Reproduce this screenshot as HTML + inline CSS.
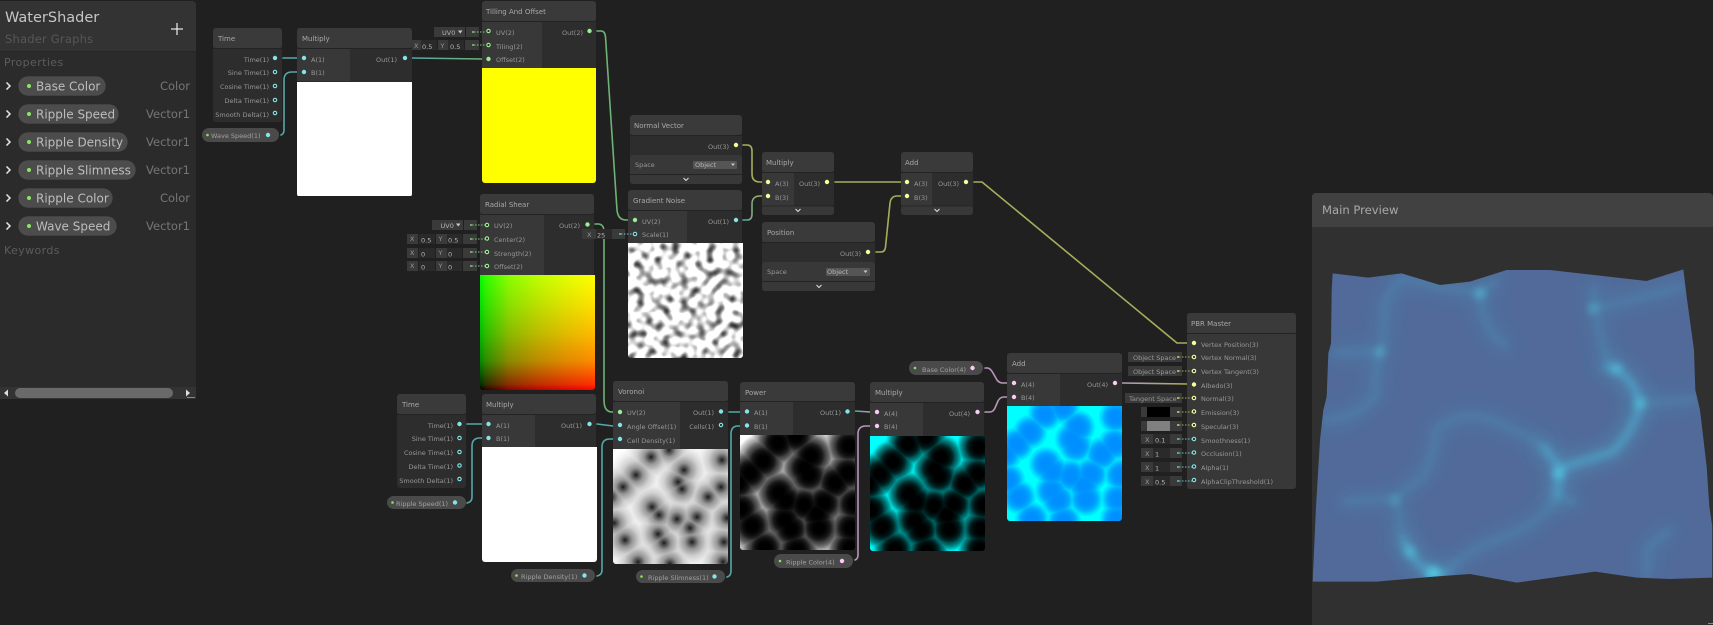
<!DOCTYPE html>
<html><head><meta charset="utf-8"><title>WaterShader</title>
<style>
html,body{margin:0;padding:0;background:#202020;width:1713px;height:625px;overflow:hidden}
svg{display:block;position:absolute;left:0;top:0}
text{font-family:"DejaVu Sans","Liberation Sans",sans-serif;font-size:6.5px;fill:#979797}
.t{fill:#a8a8a8;font-size:7px}
.e{text-anchor:end}
.v{fill:#b5b5b5}
.p{fill:#a0a0a0}
.s{fill:#bdbdbd;font-size:12px}
.ty{fill:#767676;font-size:11.5px;text-anchor:end}
.h{fill:#5c5c5c;font-size:11px;letter-spacing:.4px}
.vc{mix-blend-mode:darken}
.w{fill:none;stroke-width:1.6;stroke-linecap:round;stroke-linejoin:round}
.d{fill:none;stroke-width:1;stroke-dasharray:1.5 1.5}
.c{fill:#84e4e7}.g{fill:#9aef92}.y{fill:#f6ff9a}.k{fill:#fbcbf4}
.co{fill:#2d2d2d;stroke:#84e4e7;stroke-width:1.1}.go{fill:#2d2d2d;stroke:#9aef92;stroke-width:1.1}.yo{fill:#2d2d2d;stroke:#f6ff9a;stroke-width:1.1}
.b{fill:#2d2d2d}.ti{fill:#3a3a3a}.i{fill:#383838}.ln{fill:#232323}
.f{fill:#3a3a3a}.fv{fill:#2a2a2a}.pill{fill:#4a4a4a}
.ch{fill:none;stroke:#dcdcdc;stroke-width:1.1}
</style></head><body>
<svg width="1713" height="625" viewBox="0 0 1713 625" xmlns="http://www.w3.org/2000/svg">
<defs>
<radialGradient id="rg"><stop offset="0" stop-color="#1a1a1a"/><stop offset=".07" stop-color="#4a4a4a"/><stop offset=".2" stop-color="#969696"/><stop offset=".4" stop-color="#d0d0d0"/><stop offset=".6" stop-color="#eee"/><stop offset=".8" stop-color="#fff"/><stop offset="1" stop-color="#fff"/></radialGradient>
<g id="vor" style="isolation:isolate">
<rect x="0" y="0" width="115" height="115" fill="#fff"/>
<g fill="url(#rg)">
<circle class="vc" cx="38" cy="8" r="35"/><circle class="vc" cx="71" cy="21" r="35"/><circle class="vc" cx="23" cy="26" r="35"/><circle class="vc" cx="65" cy="33" r="35"/><circle class="vc" cx="69" cy="40" r="35"/><circle class="vc" cx="10" cy="38" r="35"/><circle class="vc" cx="109" cy="11" r="35"/><circle class="vc" cx="108" cy="38" r="35"/><circle class="vc" cx="95" cy="48" r="35"/><circle class="vc" cx="39" cy="58" r="35"/><circle class="vc" cx="46" cy="66" r="35"/><circle class="vc" cx="64" cy="70" r="35"/><circle class="vc" cx="84" cy="68" r="35"/><circle class="vc" cx="77" cy="79" r="35"/><circle class="vc" cx="45" cy="85" r="35"/><circle class="vc" cx="51" cy="94" r="35"/><circle class="vc" cx="12" cy="91" r="35"/><circle class="vc" cx="79" cy="93" r="35"/><circle class="vc" cx="56" cy="1" r="35"/><circle class="vc" cx="-2" cy="48" r="35"/><circle class="vc" cx="1" cy="74" r="35"/><circle class="vc" cx="114" cy="69" r="35"/><circle class="vc" cx="111" cy="93" r="35"/><circle class="vc" cx="25" cy="113" r="35"/><circle class="vc" cx="57" cy="115" r="35"/><circle class="vc" cx="110" cy="113" r="35"/>
</g></g>
<filter id="pow" filterUnits="userSpaceOnUse" x="0" y="0" width="115" height="115" color-interpolation-filters="sRGB"><feComponentTransfer><feFuncR type="gamma" exponent="7"/><feFuncG type="gamma" exponent="7"/><feFuncB type="gamma" exponent="7"/></feComponentTransfer></filter>
<filter id="cyan" filterUnits="userSpaceOnUse" x="0" y="0" width="115" height="115" color-interpolation-filters="sRGB"><feComponentTransfer><feFuncR type="gamma" exponent="7"/><feFuncG type="gamma" exponent="7" amplitude="1.4"/><feFuncB type="gamma" exponent="7" amplitude="1.4"/></feComponentTransfer><feColorMatrix type="matrix" values="0 0 0 0 0  0 1 0 0 0  0 0 1 0 0  0 0 0 1 0"/></filter>
<filter id="blue" filterUnits="userSpaceOnUse" x="0" y="0" width="115" height="115" color-interpolation-filters="sRGB"><feComponentTransfer><feFuncR type="gamma" exponent="7"/><feFuncG type="gamma" exponent="7" amplitude="1.1"/><feFuncB type="gamma" exponent="7"/></feComponentTransfer><feColorMatrix type="matrix" values="0 0 0 0 0  0 1 0 0 .56  0 0 0 0 1  0 0 0 1 0"/></filter>
<filter id="noise" filterUnits="userSpaceOnUse" x="0" y="0" width="115" height="115" color-interpolation-filters="sRGB"><feTurbulence type="fractalNoise" baseFrequency=".115" numOctaves="1" seed="7"/><feColorMatrix type="matrix" values="1 0 0 0 0  1 0 0 0 0  1 0 0 0 0  0 0 0 0 1"/><feComponentTransfer><feFuncR type="linear" slope="2.8" intercept="-.5"/><feFuncG type="linear" slope="2.8" intercept="-.5"/><feFuncB type="linear" slope="2.8" intercept="-.5"/></feComponentTransfer></filter>
<clipPath id="pc"><path d="M0 0H115V112a3 3 0 0 1-3 3H3a3 3 0 0 1-3-3Z"/></clipPath>
<linearGradient id="grn" x1="0" y1="0" x2="0" y2="1"><stop offset="0" stop-color="#0f0"/><stop offset=".25" stop-color="#00e100"/><stop offset=".5" stop-color="#00bc00"/><stop offset=".75" stop-color="#008900"/><stop offset=".95" stop-color="#003000"/><stop offset="1" stop-color="#000"/></linearGradient>
<linearGradient id="red" x1="0" y1="0" x2="1" y2="0"><stop offset="0" stop-color="#000"/><stop offset=".05" stop-color="#300000"/><stop offset=".25" stop-color="#890000"/><stop offset=".5" stop-color="#bc0000"/><stop offset=".75" stop-color="#e10000"/><stop offset="1" stop-color="#f00"/></linearGradient>
<linearGradient id="tg" gradientUnits="userSpaceOnUse" x1="412" y1="0" x2="482" y2="0"><stop offset="0" stop-color="#54a8aa"/><stop offset="1" stop-color="#6fb276"/></linearGradient>
<linearGradient id="ty" gradientUnits="userSpaceOnUse" x1="742" y1="0" x2="762" y2="0"><stop offset="0" stop-color="#58a8a8"/><stop offset="1" stop-color="#a8ad5c"/></linearGradient>
<linearGradient id="tp" gradientUnits="userSpaceOnUse" x1="855" y1="0" x2="870" y2="0"><stop offset="0" stop-color="#54a8aa"/><stop offset="1" stop-color="#b797b7"/></linearGradient>
<linearGradient id="py" gradientUnits="userSpaceOnUse" x1="1122" y1="0" x2="1187" y2="0"><stop offset="0" stop-color="#b797b7"/><stop offset="1" stop-color="#a8ad5c"/></linearGradient>
<clipPath id="wave"><path d="M98 280L205 293L305 280L420 315L510 305L620 270L750 270L1040 303L1150 268L1160 350L1182 510L1186 630L1200 690L1220 860L1228 980L1237 1040V1193L1110 1197L1010 1193L885 1175L650 1208L510 1182L400 1190L230 1205H38L48 980L60 780L70 690L80 650L85 520L93 490L95 330Z"/></clipPath>
<filter id="b1" filterUnits="userSpaceOnUse" x="-100" y="100" width="1500" height="1300"><feGaussianBlur stdDeviation="30"/></filter>
<filter id="b2" filterUnits="userSpaceOnUse" x="-100" y="100" width="1500" height="1300"><feGaussianBlur stdDeviation="13"/></filter>
<g id="faint" fill="none" stroke-linecap="round" stroke-linejoin="round">
<path d="M310 290Q262 340 255 380L248 510M100 520L240 515Q225 590 225 650Q170 715 70 722M310 295L420 320L540 340Q550 460 620 500M540 340L590 300"/>
<path d="M880 320L885 390Q905 500 930 555M1020 670L1190 660M885 385Q1000 360 1150 320"/>
<path d="M730 800Q690 770 620 740Q540 700 480 710L410 745Q400 830 370 890L285 955L130 965M285 955Q300 1030 310 1080"/>
<path d="M770 950Q740 1000 680 1040L520 1110L440 1170M770 950L830 970M1040 1190L1045 1100L1110 1050"/>
</g>
<g id="strong" fill="none" stroke-linecap="round" stroke-linejoin="round">
<path d="M920 560Q990 575 1020 665Q1010 740 940 815L780 865L730 800M780 865L770 950M310 1080Q340 1150 400 1185L440 1180"/>
</g>
</defs>

<rect width="1713" height="625" fill="#202020"/>

<!-- wires -->
<g class="w">
<path class="w" stroke="#54a8aa" d="M283 58H297"/>
<path class="w" stroke="#54a8aa" d="M281 135Q284 134 284 130V80Q284 72 292 72H297"/>
<path class="w" stroke="url(#tg)" d="M412 58L482 59"/>
<path class="w" stroke="#6fb276" d="M597 31H601Q605 31 605.5 37L617 210Q618 220 626 220H630"/>
<path class="w" stroke="#6fb276" d="M595 224H598Q604 224 604 232V400Q604 412 612 412H615"/>
<path class="w" stroke="url(#ty)" d="M743 220H747Q752 220 752 214V204Q752 196 760 196H762"/>
<path class="w" stroke="#a8ad5c" d="M743 145H747Q752 145 752 151V174Q752 182 760 182H762"/>
<path class="w" stroke="#a8ad5c" d="M835 182H901"/>
<path class="w" stroke="#a8ad5c" d="M876 252H881Q885 252 885.5 247L890 203Q891 196 897 196H901"/>
<path class="w" stroke="#a8ad5c" d="M974 182H982L1177 343H1187"/>
<path class="w" stroke="#54a8aa" d="M467 424H482"/>
<path class="w" stroke="#54a8aa" d="M467 503Q472 502 472 497V446Q472 438 480 438H482"/>
<path class="w" stroke="#54a8aa" d="M597 424L613 426"/>
<path class="w" stroke="#54a8aa" d="M597 576Q602 575 602 570V447Q602 439 610 439H613"/>
<path class="w" stroke="#54a8aa" d="M727 577Q731 576 731 571V434Q731 426 738 426H740"/>
<path class="w" stroke="#54a8aa" d="M729 412H740"/>
<path class="w" stroke="url(#tp)" d="M855 411L870 412"/>
<path class="w" stroke="#b797b7" d="M855 560Q858 559 858 555V434Q858 426 866 426H870"/>
<path class="w" stroke="#b797b7" d="M985 412H990Q993 412 995 408L998 401Q1000 397 1004 397H1007"/>
<path class="w" stroke="#b797b7" d="M985 368H988Q991 369 993 373L997 380Q999 383 1003 383H1007"/>
<path class="w" stroke="url(#py)" d="M1122 383L1187 384"/>
</g>

<!-- Time 1 -->
<rect class="b" x="213" y="28" width="69" height="94" rx="3"/><rect class="ti" x="213" y="28" width="69" height="20" rx="3"/><rect class="ln" x="213" y="48" width="69" height="1"/>
<text class="t" x="218" y="41">Time</text>
<text class="e" x="269" y="62">Time(1)</text><text class="e" x="269" y="75">Sine Time(1)</text><text class="e" x="269" y="89">Cosine Time(1)</text><text class="e" x="269" y="103">Delta Time(1)</text><text class="e" x="269" y="117">Smooth Delta(1)</text>
<circle class="c" cx="275" cy="58" r="2.2"/><circle class="co" cx="275" cy="72" r="1.7"/><circle class="co" cx="275" cy="86" r="1.7"/><circle class="co" cx="275" cy="100" r="1.7"/><circle class="co" cx="275" cy="113" r="1.7"/>

<!-- Wave speed pill -->
<rect class="pill" x="202" y="128" width="77" height="14" rx="7"/><circle fill="#8fe060" cx="207.5" cy="135" r="1.3"/><text class="p" x="211" y="138">Wave Speed(1)</text><circle class="c" cx="268" cy="135" r="2.2"/>

<!-- Multiply 1 -->
<rect class="b" x="297" y="28" width="115" height="54" rx="3"/><rect class="ti" x="297" y="28" width="115" height="20" rx="3"/><rect class="i" x="297" y="48" width="53" height="33"/><rect class="ln" x="297" y="48" width="115" height="1"/>
<text class="t" x="302" y="41">Multiply</text><text x="311" y="62">A(1)</text><text x="311" y="75">B(1)</text><text class="e" x="397" y="62">Out(1)</text>
<circle class="c" cx="304" cy="58" r="2.2"/><circle class="c" cx="304" cy="72" r="2.2"/><circle class="c" cx="405" cy="58" r="2.2"/>
<g transform="translate(297,82)"><rect width="115" height="114" fill="#fff" clip-path="url(#pc)"/></g>

<!-- Tiling -->
<rect class="b" x="482" y="1" width="114" height="68" rx="3"/><rect class="ti" x="482" y="1" width="114" height="20" rx="3"/><rect class="i" x="482" y="21" width="60" height="47"/><rect class="ln" x="482" y="21" width="114" height="1"/>
<text class="t" x="486" y="14">Tilling And Offset</text><text x="496" y="35">UV(2)</text><text x="496" y="49">Tiling(2)</text><text x="496" y="62">Offset(2)</text><text class="e" x="583" y="35">Out(2)</text>
<circle class="go" cx="488.500" cy="31" r="1.7"/><circle class="go" cx="488.500" cy="45" r="1.7"/><circle class="g" cx="488.500" cy="59" r="2.2"/><circle class="g" cx="589.500" cy="31" r="2.2"/>
<rect x="482" y="68" width="114" height="115" fill="#ff0" rx="3"/><rect x="482" y="68" width="114" height="6" fill="#ff0"/>
<rect class="f" x="434" y="27" width="31" height="10"/><text class="v" x="442" y="35">UV0</text><path d="M458 30.500h4.500l-2.250 3z" fill="#ccc"/>
<rect class="f" x="466" y="27" width="13" height="10"/><circle class="g" cx="473" cy="32" r=".9"/><path class="d" stroke="#7fc97f" d="M474 32H486"/>
<rect class="f" x="412" y="40" width="9" height="10"/><text x="414" y="48">X</text><rect class="fv" x="421" y="40" width="16" height="10"/><text class="v" x="422" y="49">0.5</text>
<rect class="f" x="438" y="40" width="10" height="10"/><text x="440.500" y="48">Y</text><rect class="fv" x="448" y="40" width="16" height="10"/><text class="v" x="450" y="49">0.5</text>
<rect class="f" x="465" y="40" width="14" height="10"/><circle class="g" cx="473" cy="45" r=".9"/><path class="d" stroke="#7fc97f" d="M474 45H486"/>

<!-- Normal Vector -->
<rect class="b" x="630" y="115" width="112" height="69" rx="3"/><rect class="ti" x="630" y="115" width="112" height="20" rx="3"/><rect class="ln" x="630" y="135" width="112" height="1"/><rect fill="#383838" x="630" y="155" width="112" height="29" rx="3"/><rect class="ln" x="630" y="174" width="112" height="1"/>
<text class="t" x="634" y="128">Normal Vector</text><text class="e" x="729" y="149">Out(3)</text><text x="635" y="167">Space</text>
<circle class="y" cx="736" cy="145" r="2.2"/><rect x="693" y="161" width="44" height="8" rx="1" fill="#555"/><text class="v" x="695" y="167">Object</text><path d="M731 163.500h4l-2 2.500z" fill="#ccc"/>
<path class="ch" d="M683.500 178l2.500 2.500 2.500-2.500"/>

<!-- Multiply 2 -->
<rect class="b" x="762" y="152" width="72" height="63" rx="3"/><rect class="ti" x="762" y="152" width="72" height="20" rx="3"/><rect class="i" x="762" y="172" width="32" height="34"/><rect class="ln" x="762" y="172" width="72" height="1"/><rect fill="#383838" x="762" y="206" width="72" height="9" rx="3"/><rect class="ln" x="762" y="205.500" width="72" height=".8"/>
<text class="t" x="766" y="165">Multiply</text><text x="775" y="186">A(3)</text><text x="775" y="200">B(3)</text><text class="e" x="820" y="186">Out(3)</text>
<circle class="y" cx="768" cy="182" r="2.2"/><circle class="y" cx="768" cy="196" r="2.2"/><circle class="y" cx="827" cy="182" r="2.2"/><path class="ch" d="M795.500 209l2.500 2.500 2.500-2.500"/>

<!-- Add 1 -->
<rect class="b" x="901" y="152" width="72" height="63" rx="3"/><rect class="ti" x="901" y="152" width="72" height="20" rx="3"/><rect class="i" x="901" y="172" width="31" height="34"/><rect class="ln" x="901" y="172" width="72" height="1"/><rect fill="#383838" x="901" y="206" width="72" height="9" rx="3"/><rect class="ln" x="901" y="205.500" width="72" height=".8"/>
<text class="t" x="905" y="165">Add</text><text x="914" y="186">A(3)</text><text x="914" y="200">B(3)</text><text class="e" x="959" y="186">Out(3)</text>
<circle class="y" cx="907" cy="182" r="2.2"/><circle class="y" cx="907" cy="196" r="2.2"/><circle class="y" cx="966" cy="182" r="2.2"/><path class="ch" d="M934.500 209l2.500 2.500 2.500-2.500"/>

<!-- Position -->
<rect class="b" x="762" y="222" width="113" height="69" rx="3"/><rect class="ti" x="762" y="222" width="113" height="20" rx="3"/><rect class="ln" x="762" y="242" width="113" height="1"/><rect fill="#383838" x="762" y="262" width="113" height="29" rx="3"/><rect class="ln" x="762" y="281" width="113" height="1"/>
<text class="t" x="767" y="235">Position</text><text class="e" x="861" y="256">Out(3)</text><text x="767" y="274">Space</text>
<circle class="y" cx="868" cy="252" r="2.2"/><rect x="826" y="268" width="44" height="8" rx="1" fill="#555"/><text class="v" x="827" y="274">Object</text><path d="M863.500 270.500h4l-2 2.500z" fill="#ccc"/>
<path class="ch" d="M816.500 285l2.500 2.500 2.500-2.500"/>

<!-- Radial Shear -->
<rect class="b" x="480" y="194" width="114" height="82" rx="3"/><rect class="ti" x="480" y="194" width="114" height="20" rx="3"/><rect class="i" x="480" y="214" width="64" height="61"/><rect class="ln" x="480" y="214" width="114" height="1"/>
<text class="t" x="485" y="207">Radial Shear</text><text x="494" y="228">UV(2)</text><text x="494" y="242">Center(2)</text><text x="494" y="256">Strength(2)</text><text x="494" y="269">Offset(2)</text><text class="e" x="580" y="228">Out(2)</text>
<circle class="go" cx="487" cy="225" r="1.7"/><circle class="go" cx="487" cy="238.500" r="1.7"/><circle class="go" cx="487" cy="252" r="1.7"/><circle class="go" cx="487" cy="266" r="1.7"/><circle class="g" cx="587.500" cy="224.500" r="2.2"/>
<g transform="translate(480,275)" clip-path="url(#pc)" style="isolation:isolate"><rect width="115" height="115" fill="url(#grn)"/><rect width="115" height="115" fill="url(#red)" style="mix-blend-mode:screen"/></g>
<rect class="f" x="432" y="220" width="31" height="10"/><text class="v" x="440.500" y="228">UV0</text><path d="M456 223.500h4.500l-2.250 3z" fill="#ccc"/>
<rect class="f" x="464" y="220" width="13" height="10"/><circle class="g" cx="471" cy="225" r=".9"/><path class="d" stroke="#7fc97f" d="M472 225H485"/>
<rect class="f" x="407" y="234" width="11" height="10"/><text x="410" y="241">X</text><rect class="fv" x="419" y="234" width="16" height="10"/><text class="v" x="421" y="242.500">0.5</text><rect class="f" x="436" y="234" width="11" height="10"/><text x="438.500" y="241">Y</text><rect class="fv" x="447" y="234" width="15" height="10"/><text class="v" x="448" y="242.500">0.5</text><rect class="f" x="463" y="234" width="14" height="10"/><circle class="g" cx="471" cy="239" r=".9"/><path class="d" stroke="#7fc97f" d="M472 239H485"/>
<rect class="f" x="407" y="248" width="11" height="10"/><text x="410" y="255">X</text><rect class="fv" x="419" y="248" width="16" height="10"/><text class="v" x="421" y="256.500">0</text><rect class="f" x="436" y="248" width="11" height="10"/><text x="438.500" y="255">Y</text><rect class="fv" x="447" y="248" width="15" height="10"/><text class="v" x="448" y="256.500">0</text><rect class="f" x="463" y="248" width="14" height="10"/><circle class="g" cx="471" cy="252" r=".9"/><path class="d" stroke="#7fc97f" d="M472 252H485"/>
<rect class="f" x="407" y="261" width="11" height="10"/><text x="410" y="268">X</text><rect class="fv" x="419" y="261" width="16" height="10"/><text class="v" x="421" y="269.500">0</text><rect class="f" x="436" y="261" width="11" height="10"/><text x="438.500" y="268">Y</text><rect class="fv" x="447" y="261" width="15" height="10"/><text class="v" x="448" y="269.500">0</text><rect class="f" x="463" y="261" width="14" height="10"/><circle class="g" cx="471" cy="266" r=".9"/><path class="d" stroke="#7fc97f" d="M472 266H485"/>

<!-- Gradient Noise -->
<rect class="b" x="628" y="190" width="114" height="54" rx="3"/><rect class="ti" x="628" y="190" width="114" height="20" rx="3"/><rect class="i" x="628" y="210" width="59" height="33"/><rect class="ln" x="628" y="210" width="114" height="1"/>
<text class="t" x="633" y="203">Gradient Noise</text><text x="642" y="224">UV(2)</text><text x="642" y="237">Scale(1)</text><text class="e" x="729" y="224">Out(1)</text>
<circle class="g" cx="635" cy="220" r="2.2"/><circle class="co" cx="635" cy="234" r="1.7"/><circle class="c" cx="736" cy="220" r="2.2"/>
<g transform="translate(628,243)" clip-path="url(#pc)"><rect width="115" height="115" filter="url(#noise)"/></g>
<rect class="f" x="582" y="229" width="14" height="10"/><text x="587" y="237">X</text><rect class="fv" x="596" y="229" width="16" height="10"/><text class="v" x="597" y="237.500">25</text><rect class="f" x="612" y="229" width="13" height="10"/><circle class="c" cx="620" cy="234" r=".9"/><path class="d" stroke="#6cc" d="M621 234H633"/>

<!-- Time 2 -->
<rect class="b" x="397" y="394" width="69" height="94" rx="3"/><rect class="ti" x="397" y="394" width="69" height="20" rx="3"/><rect class="ln" x="397" y="414" width="69" height="1"/>
<text class="t" x="402" y="407">Time</text>
<text class="e" x="453" y="428">Time(1)</text><text class="e" x="453" y="441">Sine Time(1)</text><text class="e" x="453" y="455">Cosine Time(1)</text><text class="e" x="453" y="469">Delta Time(1)</text><text class="e" x="453" y="483">Smooth Delta(1)</text>
<circle class="c" cx="459.500" cy="424" r="2.2"/><circle class="co" cx="459.500" cy="438" r="1.7"/><circle class="co" cx="459.500" cy="452" r="1.7"/><circle class="co" cx="459.500" cy="465.500" r="1.7"/><circle class="co" cx="459.500" cy="479" r="1.7"/>
<rect class="pill" x="387" y="496" width="79" height="13" rx="6.500"/><circle fill="#8fe060" cx="392.500" cy="502.500" r="1.3"/><text class="p" x="396" y="506">Ripple Speed(1)</text><circle class="c" cx="455" cy="502.500" r="2.2"/>

<!-- Multiply 4 -->
<rect class="b" x="482" y="394" width="114" height="54" rx="3"/><rect class="ti" x="482" y="394" width="114" height="20" rx="3"/><rect class="i" x="482" y="414" width="53" height="33"/><rect class="ln" x="482" y="414" width="114" height="1"/>
<text class="t" x="486" y="407">Multiply</text><text x="496" y="428">A(1)</text><text x="496" y="441">B(1)</text><text class="e" x="582" y="428">Out(1)</text>
<circle class="c" cx="488.500" cy="424" r="2.2"/><circle class="c" cx="488.500" cy="438" r="2.2"/><circle class="c" cx="589.500" cy="424" r="2.2"/>
<g transform="translate(482,447)"><rect width="115" height="115" fill="#fff" clip-path="url(#pc)"/></g>
<rect class="pill" x="511" y="569" width="84" height="13" rx="6.500"/><circle fill="#8fe060" cx="516.500" cy="575.500" r="1.300"/><text class="p" x="521" y="579">Ripple Density(1)</text><circle class="c" cx="584.500" cy="575.500" r="2.2"/>

<!-- Voronoi -->
<rect class="b" x="613" y="381" width="115" height="69" rx="3"/><rect class="ti" x="613" y="381" width="115" height="20" rx="3"/><rect class="i" x="613" y="401" width="67" height="48"/><rect class="ln" x="613" y="401" width="115" height="1"/>
<text class="t" x="618" y="394">Voronoi</text><text x="627" y="415">UV(2)</text><text x="627" y="429">Angle Offset(1)</text><text x="627" y="443">Cell Density(1)</text><text class="e" x="714" y="415">Out(1)</text><text class="e" x="714" y="429">Cells(1)</text>
<circle class="g" cx="620" cy="412" r="2.2"/><circle class="c" cx="620" cy="425" r="2.2"/><circle class="c" cx="620" cy="439" r="2.2"/><circle class="c" cx="721" cy="411.500" r="2.2"/><circle class="co" cx="721" cy="425" r="1.700"/>
<g transform="translate(613,449)" clip-path="url(#pc)"><use href="#vor"/></g>
<rect class="pill" x="636" y="570" width="89" height="13" rx="6.500"/><circle fill="#8fe060" cx="641.500" cy="576.500" r="1.300"/><text class="p" x="648" y="580">Ripple Slimness(1)</text><circle class="c" cx="714.500" cy="576.500" r="2.2"/>

<!-- Power -->
<rect class="b" x="740" y="382" width="115" height="54" rx="3"/><rect class="ti" x="740" y="382" width="115" height="20" rx="3"/><rect class="i" x="740" y="401" width="53" height="34"/><rect class="ln" x="740" y="401" width="115" height="1"/>
<text class="t" x="745" y="395">Power</text><text x="754" y="415">A(1)</text><text x="754" y="429">B(1)</text><text class="e" x="841" y="415">Out(1)</text>
<circle class="c" cx="747" cy="411.500" r="2.2"/><circle class="c" cx="747" cy="425.500" r="2.2"/><circle class="c" cx="847.500" cy="411.500" r="2.2"/>
<g transform="translate(740,435)" clip-path="url(#pc)"><use href="#vor" filter="url(#pow)"/></g>
<rect class="pill" x="774" y="554" width="79" height="14" rx="7"/><circle fill="#8fe060" cx="780" cy="561" r="1.300"/><text class="p" x="786" y="564.500">Ripple Color(4)</text><circle class="k" cx="842" cy="561" r="2.2"/>

<!-- Multiply 3 -->
<rect class="b" x="870" y="382" width="114" height="55" rx="3"/><rect class="ti" x="870" y="382" width="114" height="20" rx="3"/><rect class="i" x="870" y="402" width="53" height="34"/><rect class="ln" x="870" y="402" width="114" height="1"/>
<text class="t" x="875" y="395">Multiply</text><text x="884" y="416">A(4)</text><text x="884" y="429">B(4)</text><text class="e" x="970" y="416">Out(4)</text>
<circle class="k" cx="877" cy="412" r="2.2"/><circle class="k" cx="877" cy="426" r="2.2"/><circle class="k" cx="977.500" cy="412" r="2.2"/>
<g transform="translate(870,436)" clip-path="url(#pc)"><use href="#vor" filter="url(#cyan)"/></g>

<!-- Base Color pill -->
<rect class="pill" x="909" y="361" width="74" height="14" rx="7"/><circle fill="#8fe060" cx="915" cy="368" r="1.300"/><text class="p" x="922" y="372">Base Color(4)</text><circle class="k" cx="972.500" cy="368" r="2.2"/>

<!-- Add 2 -->
<rect class="b" x="1007" y="353" width="115" height="54" rx="3"/><rect class="ti" x="1007" y="353" width="115" height="20" rx="3"/><rect class="i" x="1007" y="373" width="53" height="33"/><rect class="ln" x="1007" y="373" width="115" height="1"/>
<text class="t" x="1012" y="366">Add</text><text x="1021" y="387">A(4)</text><text x="1021" y="400">B(4)</text><text class="e" x="1108" y="387">Out(4)</text>
<circle class="k" cx="1014" cy="383" r="2.2"/><circle class="k" cx="1014" cy="397" r="2.2"/><circle class="k" cx="1115" cy="383" r="2.2"/>
<g transform="translate(1007,406)" clip-path="url(#pc)"><use href="#vor" filter="url(#blue)"/></g>

<!-- PBR Master -->
<rect fill="#383838" x="1187" y="313" width="109" height="176" rx="3"/><rect class="ti" x="1187" y="313" width="109" height="20" rx="3"/><rect class="ln" x="1187" y="333" width="109" height="1"/>
<text class="t" x="1191" y="326">PBR Master</text>
<text x="1201" y="347">Vertex Position(3)</text><text x="1201" y="360">Vertex Normal(3)</text><text x="1201" y="374">Vertex Tangent(3)</text><text x="1201" y="388">Albedo(3)</text><text x="1201" y="401">Normal(3)</text><text x="1201" y="415">Emission(3)</text><text x="1201" y="429">Specular(3)</text><text x="1201" y="443">Smoothness(1)</text><text x="1201" y="456">Occlusion(1)</text><text x="1201" y="470">Alpha(1)</text><text x="1201" y="484">AlphaClipThreshold(1)</text>
<circle class="y" cx="1194" cy="343" r="2.2"/><circle class="yo" cx="1194" cy="357" r="1.700"/><circle class="yo" cx="1194" cy="371" r="1.700"/><circle class="y" cx="1194" cy="384.500" r="2.2"/><circle class="yo" cx="1194" cy="398" r="1.700"/><circle class="yo" cx="1194" cy="411.500" r="1.700"/><circle class="yo" cx="1194" cy="425" r="1.700"/><circle class="co" cx="1194" cy="439" r="1.700"/><circle class="co" cx="1194" cy="452.500" r="1.700"/><circle class="co" cx="1194" cy="466.500" r="1.700"/><circle class="co" cx="1194" cy="480" r="1.700"/>
<!-- PBR inputs -->
<rect class="f" x="1128" y="352" width="54" height="10"/><text x="1133" y="360">Object Space</text><circle class="y" cx="1178" cy="357" r=".9"/><path class="d" stroke="#a8ad5c" d="M1179 357H1192"/>
<rect class="f" x="1128" y="366" width="54" height="10"/><text x="1133" y="374">Object Space</text><circle class="y" cx="1178" cy="371" r=".9"/><path class="d" stroke="#a8ad5c" d="M1179 371H1192"/>
<rect class="f" x="1125" y="393" width="57" height="10"/><text x="1129" y="401">Tangent Space</text><circle class="y" cx="1178" cy="398" r=".9"/><path class="d" stroke="#a8ad5c" d="M1179 398H1192"/>
<rect class="f" x="1141" y="407" width="32" height="10"/><rect x="1147" y="407" width="23" height="10" fill="#000"/><rect class="f" x="1170" y="407" width="12" height="10"/><circle class="y" cx="1178" cy="412" r=".9"/><path class="d" stroke="#a8ad5c" d="M1179 412H1192"/>
<rect class="f" x="1141" y="421" width="32" height="10"/><rect x="1147" y="421" width="23" height="10" fill="#808080"/><rect class="f" x="1170" y="421" width="12" height="10"/><circle class="y" cx="1178" cy="425" r=".9"/><path class="d" stroke="#a8ad5c" d="M1179 425H1192"/>
<rect class="f" x="1141" y="434" width="12" height="10"/><text x="1145" y="442">X</text><rect class="fv" x="1153" y="434" width="17" height="10"/><text class="v" x="1155" y="442.500">0.1</text><rect class="f" x="1170" y="434" width="12" height="10"/><circle class="c" cx="1178" cy="439" r=".9"/><path class="d" stroke="#6cc" d="M1179 439H1192"/>
<rect class="f" x="1141" y="448" width="12" height="10"/><text x="1145" y="456">X</text><rect class="fv" x="1153" y="448" width="17" height="10"/><text class="v" x="1155" y="456.500">1</text><rect class="f" x="1170" y="448" width="12" height="10"/><circle class="c" cx="1178" cy="453" r=".9"/><path class="d" stroke="#6cc" d="M1179 453H1192"/>
<rect class="f" x="1141" y="462" width="12" height="10"/><text x="1145" y="470">X</text><rect class="fv" x="1153" y="462" width="17" height="10"/><text class="v" x="1155" y="470.500">1</text><rect class="f" x="1170" y="462" width="12" height="10"/><circle class="c" cx="1178" cy="467" r=".9"/><path class="d" stroke="#6cc" d="M1179 467H1192"/>
<rect class="f" x="1141" y="476" width="12" height="10"/><text x="1145" y="484">X</text><rect class="fv" x="1153" y="476" width="17" height="10"/><text class="v" x="1155" y="484.500">0.5</text><rect class="f" x="1170" y="476" width="12" height="10"/><circle class="c" cx="1178" cy="481" r=".9"/><path class="d" stroke="#6cc" d="M1179 481H1192"/>

<!-- Blackboard -->
<path d="M0 1H192a4 4 0 0 1 4 4V399H0Z" fill="#2b2b2b"/>
<path d="M0 1H192a4 4 0 0 1 4 4V51H0Z" fill="#333"/>
<rect x="0" y="51" width="196" height="1" fill="#262626"/>
<text x="5" y="22" style="font-size:14.500px;fill:#c6c6c6">WaterShader</text>
<text x="5" y="43" style="font-size:11.500px;fill:#575757;letter-spacing:.2px">Shader Graphs</text>
<path d="M177 23V35M171 29H183" stroke="#e2e2e2" stroke-width="1.300" fill="none"/>
<text class="h" x="4" y="66">Properties</text>
<text class="h" x="4" y="254">Keywords</text>
<g fill="#4c4c4c" stroke="#262626" stroke-width=".5"><rect x="18" y="76" width="88" height="20" rx="10"/><rect x="18" y="104" width="101" height="20" rx="10"/><rect x="18" y="132" width="110" height="20" rx="10"/><rect x="18" y="160" width="118" height="20" rx="10"/><rect x="18" y="188" width="95" height="20" rx="10"/><rect x="18" y="216" width="99" height="20" rx="10"/></g>
<g fill="#8be65d"><circle cx="29" cy="86" r="2"/><circle cx="29" cy="114" r="2"/><circle cx="29" cy="142" r="2"/><circle cx="29" cy="170" r="2"/><circle cx="29" cy="198" r="2"/><circle cx="29" cy="226" r="2"/></g>
<g fill="none" stroke="#e6e6e6" stroke-width="1.500"><path d="M6.500 82.500l3.500 3.500-3.500 3.500"/><path d="M6.500 110.500l3.500 3.500-3.500 3.500"/><path d="M6.500 138.500l3.500 3.500-3.500 3.500"/><path d="M6.500 166.500l3.500 3.500-3.500 3.500"/><path d="M6.500 194.500l3.500 3.500-3.500 3.500"/><path d="M6.500 222.500l3.500 3.500-3.500 3.500"/></g>
<text class="s" x="36" y="90.500">Base Color</text><text class="s" x="36" y="118.500">Ripple Speed</text><text class="s" x="36" y="146.500">Ripple Density</text><text class="s" x="36" y="174.500">Ripple Slimness</text><text class="s" x="36" y="202.500">Ripple Color</text><text class="s" x="36" y="230.500">Wave Speed</text>
<text class="ty" x="190" y="90">Color</text><text class="ty" x="190" y="118">Vector1</text><text class="ty" x="190" y="146">Vector1</text><text class="ty" x="190" y="174">Vector1</text><text class="ty" x="190" y="202">Color</text><text class="ty" x="190" y="230">Vector1</text>
<rect x="0" y="387" width="196" height="12" fill="#333"/>
<rect x="15" y="388" width="158" height="10" rx="5" fill="#6a6a6a"/>
<path d="M8 389.500v7l-4-3.500zM186 389.500v7l4-3.500z" fill="#ddd"/>
<rect x="187" y="397" width="8" height="1" fill="#888"/>

<!-- Main Preview -->
<path d="M1316 193H1709a4 4 0 0 1 4 4V625H1312V197a4 4 0 0 1 4-4Z" fill="#303030"/>
<path d="M1316 193H1709a4 4 0 0 1 4 4V227H1312V197a4 4 0 0 1 4-4Z" fill="#414141"/>
<text x="1322" y="214" style="font-size:11.600px;fill:#a9a9a9">Main Preview</text>
<g transform="translate(1300,180) scale(.33333)">
<g clip-path="url(#wave)">
<rect x="0" y="200" width="1300" height="1100" fill="#516a99"/>
<use href="#faint" stroke="#4a9cc0" stroke-width="34" stroke-opacity=".3" filter="url(#b1)"/>
<use href="#faint" stroke="#48a8cc" stroke-width="9" stroke-opacity=".45" filter="url(#b2)"/>
<use href="#strong" stroke="#4aa8cc" stroke-width="44" stroke-opacity=".45" filter="url(#b1)"/>
<use href="#strong" stroke="#4cc8e6" stroke-width="12" stroke-opacity=".75" filter="url(#b2)"/>
<g fill="#52cfe8" filter="url(#b2)"><circle cx="400" cy="1180" r="20"/><circle cx="330" cy="1115" r="12"/><circle cx="775" cy="880" r="15"/><circle cx="1020" cy="670" r="12"/><circle cx="950" cy="565" r="12"/><circle cx="240" cy="515" r="10"/><circle cx="540" cy="340" r="12"/><circle cx="880" cy="385" r="10"/><circle cx="285" cy="960" r="8"/></g>
</g></g>
<rect x="1708" y="623" width="5" height="1" fill="#888"/>
</svg>
</body></html>
